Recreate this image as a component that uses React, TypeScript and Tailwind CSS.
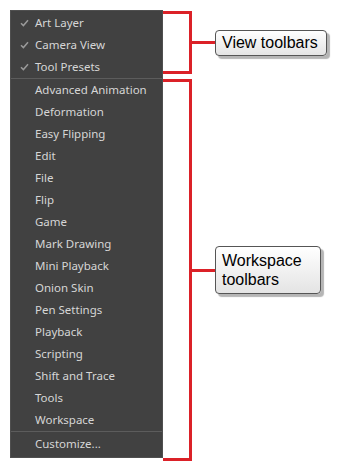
import React from "react";

const viewItems = ["Art Layer", "Camera View", "Tool Presets"];
const workspaceItems = [
  "Advanced Animation",
  "Deformation",
  "Easy Flipping",
  "Edit",
  "File",
  "Flip",
  "Game",
  "Mark Drawing",
  "Mini Playback",
  "Onion Skin",
  "Pen Settings",
  "Playback",
  "Scripting",
  "Shift and Trace",
  "Tools",
  "Workspace",
];

function Check() {
  return (
    <svg width="9" height="8" viewBox="0 0 9 8" className="text-[#9a9a9a]">
      <path d="M1 4.2 L3.4 6.6 L8 1.2" fill="none" stroke="currentColor" strokeWidth="1.5" />
    </svg>
  );
}

function Row({ label, checked }: { label: string; checked?: boolean }) {
  return (
    <div className="flex h-[22px] items-center">
      <span className="flex w-[24px] justify-center pl-[2px]">{checked && <Check />}</span>
      <span>{label}</span>
    </div>
  );
}

function Callout({ children, className }: { children: React.ReactNode; className?: string }) {
  return (
    <div
      className={
        "rounded-[4px] border-[1.5px] border-[#555] bg-gradient-to-b from-white to-[#e4e4e4] px-[6px] text-[16px] leading-[19px] text-black shadow-[3px_3px_1px_#b5b5b5] [font-family:'Liberation_Sans',Arial,sans-serif] " +
        (className ?? "")
      }
    >
      {children}
    </div>
  );
}

export default function App() {
  return (
    <div className="flex min-h-[466px] w-[341px] bg-white p-[10px]">
      <div className="w-[153px] self-start border border-[#4f4f4f] bg-[#414141] pt-px pb-[2px] text-[11.5px] text-[#d6d6d6] [font-family:'Noto_Sans',sans-serif]">
        {viewItems.map((l) => (
          <Row key={l} label={l} checked />
        ))}
        <div className="h-px bg-[#5c5c5c]" />
        {workspaceItems.map((l) => (
          <Row key={l} label={l} />
        ))}
        <div className="mb-px h-px bg-[#5c5c5c]" />
        <Row label="Customize..." />
      </div>

      <div className="flex flex-col">
        {/* View toolbars bracket */}
        <div className="mt-px flex h-[63px] items-center">
          <div className="h-full w-[29px] border-y-[3px] border-r-[3px] border-[#db2128]" />
          <div className="h-[3px] w-[23px] bg-[#db2128]" />
          <Callout className="w-[112px] py-[2.5px]">View toolbars</Callout>
        </div>
        {/* Workspace toolbars bracket */}
        <div className="mt-[5px] flex h-[382px] items-center">
          <div className="h-full w-[29px] border-y-[3px] border-r-[3px] border-[#db2128]" />
          <div className="h-[3px] w-[23px] bg-[#db2128]" />
          <Callout className="w-[106px] py-[4px]">
            Workspace
            <br />
            toolbars
          </Callout>
        </div>
      </div>
    </div>
  );
}
